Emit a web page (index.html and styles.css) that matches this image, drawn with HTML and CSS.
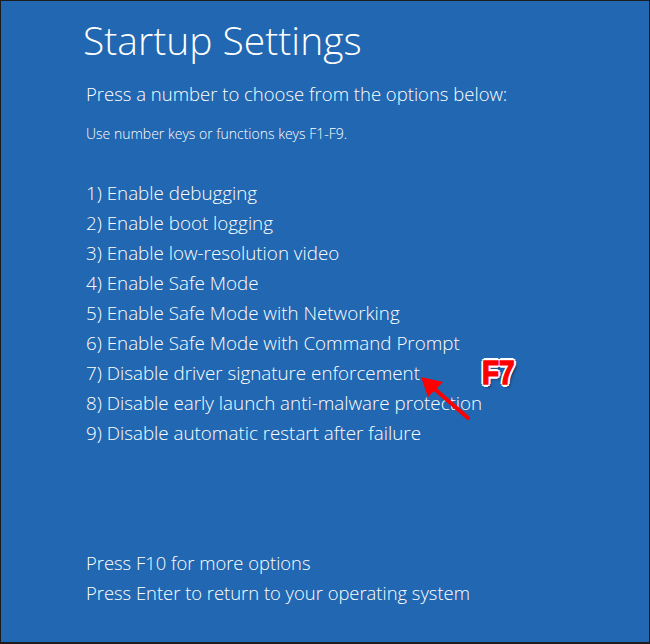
FILE: index.html
```html
<!DOCTYPE html>
<html lang="en">
<head>
  <meta charset="UTF-8" />
  <title>Startup Settings</title>
  <link rel="stylesheet" href="styles.css">
</head>
<body>
  <div class="screen">
    <h1 class="title">Startup Settings</h1>
    <p class="lead">Press a number to choose from the options below:</p>
    <p class="hint">Use number keys or functions keys F1-F9.</p>

    <ul class="options">
      <li>1) Enable debugging</li>
      <li>2) Enable boot logging</li>
      <li>3) Enable low-resolution video</li>
      <li>4) Enable Safe Mode</li>
      <li>5) Enable Safe Mode with Networking</li>
      <li>6) Enable Safe Mode with Command Prompt</li>
      <li>7) Disable driver signature enforcement</li>
      <li>8) Disable early launch anti-malware protection</li>
      <li>9) Disable automatic restart after failure</li>
    </ul>

    <div class="footer-opts">
      <p>Press F10 for more options</p>
      <p>Press Enter to return to your operating system</p>
    </div>

    <!-- annotation -->
    <svg class="arrow" width="60" height="50" viewBox="0 0 60 50">
      <line x1="50" y1="45" x2="12" y2="12" stroke="#f00" stroke-width="4" stroke-linecap="round"/>
      <polygon points="3,4 25,9 10,24" fill="#f00"/>
    </svg>
    <span class="badge">F7</span>
  </div>
</body>
</html>
```

FILE: styles.css
```css
html, body {
  margin: 0;
  padding: 0;
}

body {
  font-family: 'Open Sans', 'Noto Sans', sans-serif;
  color: #fff;
  background: #1c1c1c;
}

.screen {
  position: relative;
  box-sizing: border-box;
  width: 650px;
  height: 644px;
  border: 1px solid #1c1c1c;
  border-bottom-width: 2px;
  background-color: #2167b1;
  padding: 0 0 0 85px;
  display: flex;
  flex-direction: column;
}

.title {
  margin: 14px 0 0 -3px;
  font-size: 39px;
  font-weight: 300;
  line-height: 50px;
}

.lead {
  margin: 16px 0 0;
  font-size: 18.5px;
  font-weight: 300;
  line-height: 26px;
}

.hint {
  margin: 18px 0 0;
  font-size: 14px;
  font-weight: 300;
  line-height: 18px;
}

.options {
  list-style: none;
  margin: 35px 0 0;
  padding: 0;
  font-size: 18.8px;
  font-weight: 300;
  line-height: 30px;
}

.footer-opts {
  margin-top: auto;
  margin-bottom: 34px;
  font-size: 18.4px;
  font-weight: 300;
  line-height: 30px;
}

.footer-opts p {
  margin: 0;
}

.arrow {
  position: absolute;
  left: 417px;
  top: 372px;
}

.badge {
  position: absolute;
  left: 481px;
  top: 351px;
  display: inline-block;
  transform: scaleX(0.82);
  transform-origin: left center;
  font-family: 'Liberation Sans', Arial, sans-serif;
  font-weight: 700;
  font-size: 34px;
  line-height: 40px;
  color: #f00;
  -webkit-text-stroke: 1.5px #f00;
  text-shadow:
    -2px -2px 0 #fff, 2px -2px 0 #fff, -2px 2px 0 #fff, 2px 2px 0 #fff,
    0 -3px 0 #fff, 0 3px 0 #fff, -3px 0 0 #fff, 3px 0 0 #fff,
    3px 3px 3px rgba(0,0,0,0.6);
}
```
